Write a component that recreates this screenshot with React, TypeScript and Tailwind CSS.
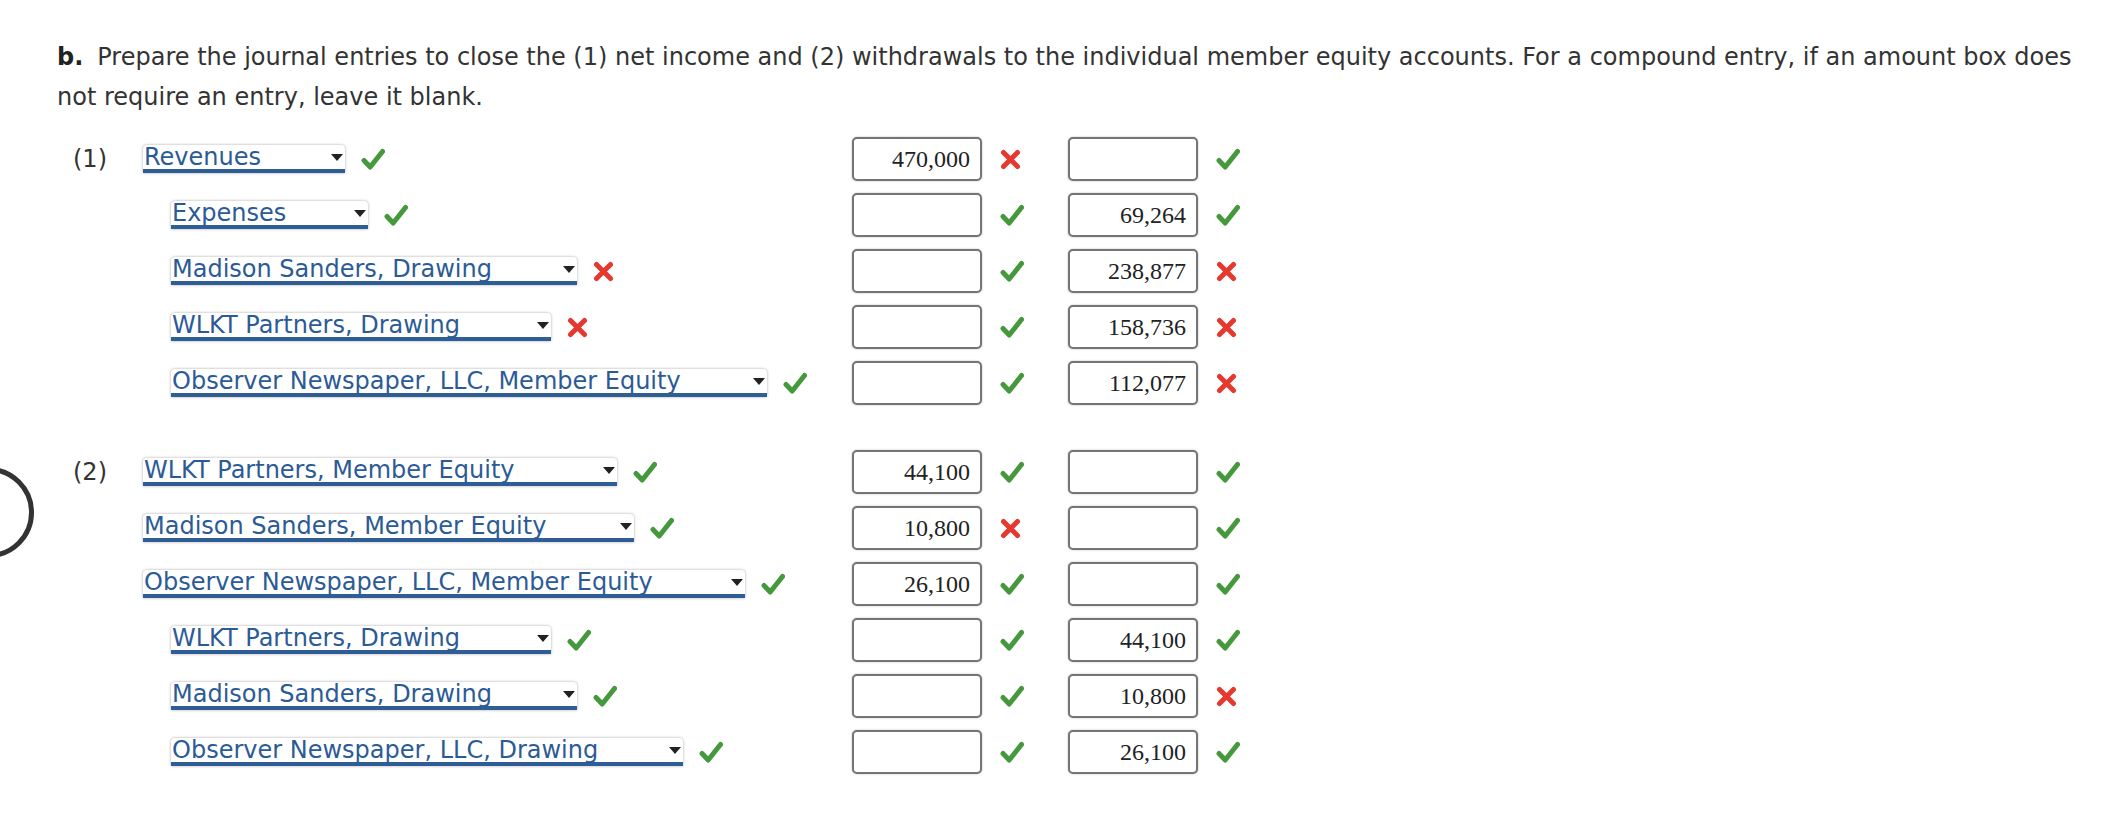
import React from 'react';

interface Entry {
  label?: string;
  account: string;
  width: number;
  indent?: boolean;
  accountOk: boolean;
  debit: string;
  debitOk: boolean;
  credit: string;
  creditOk: boolean;
}

const closeNetIncome: Entry[] = [
  { label: '(1)', account: 'Revenues', width: 202, accountOk: true, debit: '470,000', debitOk: false, credit: '', creditOk: true },
  { account: 'Expenses', width: 197, indent: true, accountOk: true, debit: '', debitOk: true, credit: '69,264', creditOk: true },
  { account: 'Madison Sanders, Drawing', width: 406, indent: true, accountOk: false, debit: '', debitOk: true, credit: '238,877', creditOk: false },
  { account: 'WLKT Partners, Drawing', width: 380, indent: true, accountOk: false, debit: '', debitOk: true, credit: '158,736', creditOk: false },
  { account: 'Observer Newspaper, LLC, Member Equity', width: 596, indent: true, accountOk: true, debit: '', debitOk: true, credit: '112,077', creditOk: false },
];

const closeWithdrawals: Entry[] = [
  { label: '(2)', account: 'WLKT Partners, Member Equity', width: 474, accountOk: true, debit: '44,100', debitOk: true, credit: '', creditOk: true },
  { account: 'Madison Sanders, Member Equity', width: 491, accountOk: true, debit: '10,800', debitOk: false, credit: '', creditOk: true },
  { account: 'Observer Newspaper, LLC, Member Equity', width: 602, accountOk: true, debit: '26,100', debitOk: true, credit: '', creditOk: true },
  { account: 'WLKT Partners, Drawing', width: 380, indent: true, accountOk: true, debit: '', debitOk: true, credit: '44,100', creditOk: true },
  { account: 'Madison Sanders, Drawing', width: 406, indent: true, accountOk: true, debit: '', debitOk: true, credit: '10,800', creditOk: false },
  { account: 'Observer Newspaper, LLC, Drawing', width: 512, indent: true, accountOk: true, debit: '', debitOk: true, credit: '26,100', creditOk: true },
];

const Check = () => (
  <svg width="24" height="25" viewBox="0 0 24 25" className="block">
    <path d="M3 13.5 L9.2 20 L21.5 4.5" fill="none" stroke="#45983b" strokeWidth="5" strokeLinecap="round" strokeLinejoin="round" />
  </svg>
);

const Cross = () => (
  <svg width="21" height="21" viewBox="0 0 21 21" className="block">
    <path d="M3.5 3.5 L17.5 17.5 M17.5 3.5 L3.5 17.5" stroke="#e5392f" strokeWidth="5" strokeLinecap="round" />
  </svg>
);

const Mark = ({ ok }: { ok: boolean }) => (ok ? <Check /> : <Cross />);

const AccountSelect = ({ name, width }: { name: string; width: number }) => (
  <div
    className="flex h-[28px] items-start justify-between rounded-t-[4px] border-b-[4px] border-[#2f5e96] bg-white shadow-[0_0_3px_rgba(0,0,0,0.35)]"
    style={{ width }}
  >
    <span className="pl-[1px] text-[24px] leading-[24px] text-[#2b5b96]">{name}</span>
    <svg width="12" height="7" viewBox="0 0 12 7" className="mr-[2px] mt-[9px]">
      <path d="M0 0 L12 0 L6 7 Z" fill="#222" />
    </svg>
  </div>
);

const AmountBox = ({ value }: { value: string }) => (
  <div className="flex h-[44px] w-[130px] items-center justify-end rounded-[5px] border-2 border-[#757575] bg-white pr-[10px] font-['Liberation_Serif',serif] text-[24px] text-[#222] shadow-[0_0_2px_rgba(0,0,0,0.3)]">
    {value}
  </div>
);

const EntryRow = ({ entry }: { entry: Entry }) => (
  <div className="flex h-[44px] items-center">
    <div className="flex w-[779px] items-center">
      <span className="w-[70px] text-[#333]">{entry.label}</span>
      <div className={entry.indent ? 'flex items-center pl-[28px]' : 'flex items-center'}>
        <AccountSelect name={entry.account} width={entry.width} />
        <div className="ml-[16px]">
          <Mark ok={entry.accountOk} />
        </div>
      </div>
    </div>
    <AmountBox value={entry.debit} />
    <div className="w-[86px] pl-[18px]">
      <Mark ok={entry.debitOk} />
    </div>
    <AmountBox value={entry.credit} />
    <div className="pl-[18px]">
      <Mark ok={entry.creditOk} />
    </div>
  </div>
);

export default function App() {
  return (
    <div className="relative min-h-[834px] overflow-hidden bg-white pl-[57px] pr-[20px] pt-[37px] font-['DejaVu_Sans',sans-serif] text-[24px] text-[#333]">
      {/* cut-off round button at the left edge */}
      <div className="absolute left-[-57px] top-[467px] h-[91px] w-[91px] rounded-full border-[5px] border-[#333]" />

      <p className="leading-[40px]">
        <b className="mr-[14px] text-[#222]">b.</b>Prepare the journal entries to close the (1) net income and (2) withdrawals to the individual member equity accounts. For a compound entry, if an amount box does not require an entry, leave it blank.
      </p>

      <div className="mt-[20px] flex flex-col gap-[12px] pl-[16px]">
        {closeNetIncome.map((entry, i) => (
          <EntryRow key={`ni-${i}`} entry={entry} />
        ))}
      </div>

      <div className="mt-[45px] flex flex-col gap-[12px] pl-[16px]">
        {closeWithdrawals.map((entry, i) => (
          <EntryRow key={`wd-${i}`} entry={entry} />
        ))}
      </div>
    </div>
  );
}
